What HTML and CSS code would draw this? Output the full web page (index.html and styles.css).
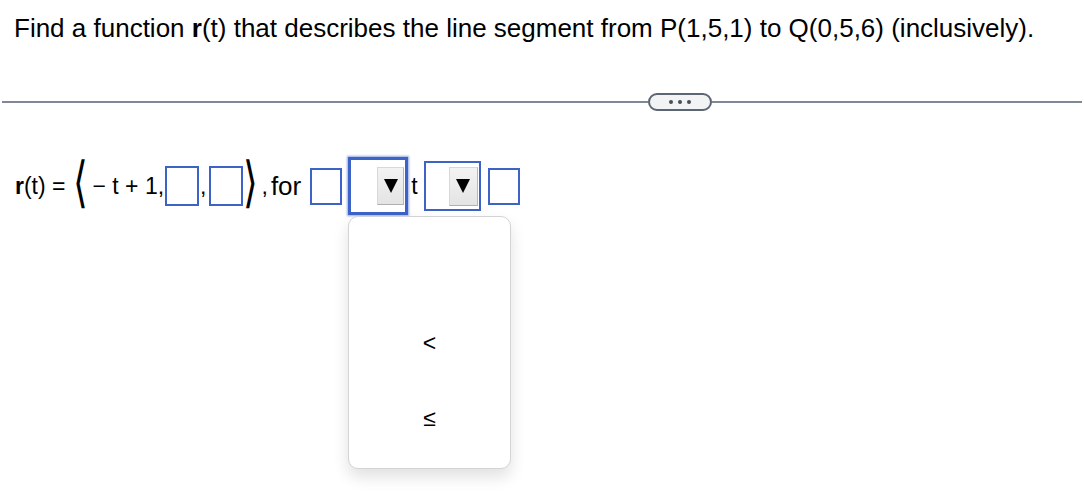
FILE: index.html
```html
<!DOCTYPE html>
<html>
<head>
<meta charset="utf-8">
<link rel="stylesheet" href="styles.css">
</head>
<body>
<div class="page">
  <p class="question">Find a function <b>r</b>(t) that describes the line segment from P(1,5,1) to Q(0,5,6) (inclusively).</p>
  <div class="divider">
    <span class="line first"></span>
    <span class="more"><i></i><i></i><i></i></span>
    <span class="line"></span>
  </div>
  <div class="answer">
    <span class="txt"><b>r</b>(t) =</span>
    <span class="angle">⟨</span>
    <span class="txt">− t + 1,</span>
    <span class="box"></span>
    <span class="txt comma">,</span>
    <span class="box"></span>
    <span class="angle r">⟩</span>
    <span class="txt comma2">,</span>
    <span class="txt for">for</span>
    <span class="box small"></span>
    <span class="sel focus"><span class="btn"><span class="tri"></span></span></span>
    <span class="txt tvar">t</span>
    <span class="sel second"><span class="btn wide"><span class="tri"></span></span></span>
    <span class="box small last"></span>
  </div>
  <div class="menu">
    <div class="opt">&lt;</div>
    <div class="opt">≤</div>
  </div>
</div>
</body>
</html>
```

FILE: styles.css
```css
html, body {
  margin: 0;
  padding: 0;
  background: #fff;
}
body {
  font-family: "Liberation Sans", Arial, sans-serif;
  color: #000;
}
.page {
  width: 1084px;
  height: 498px;
  position: relative;
  overflow: hidden;
}
.question {
  margin: 0;
  padding: 13px 0 0 14px;
  font-size: 26px;
  line-height: 30px;
}
.divider {
  display: flex;
  align-items: center;
  margin-top: 50px;
  padding: 0 2px;
}
.line {
  flex: 1;
  height: 2px;
  background: #7f8896;
}
.line.first {
  flex: 0 0 646px;
}
.more {
  display: flex;
  align-items: center;
  justify-content: center;
  gap: 5px;
  width: 60px;
  height: 14px;
  border: 2px solid #5b6573;
  border-radius: 10px;
  background: #f2f3f5;
}
.more i {
  width: 4px;
  height: 4px;
  border-radius: 50%;
  background: #4a4f57;
}
.answer {
  display: flex;
  align-items: center;
  margin-top: 45px;
  padding-left: 15px;
  height: 60px;
  font-size: 23px;
}
.txt {
  white-space: pre;
}
.angle {
  display: inline-block;
  font-family: "DejaVu Sans ExtraLight", "DejaVu Sans", sans-serif;
  font-size: 40px;
  font-weight: 200;
  line-height: 1;
  margin: 0 3px 0 8px;
  transform: translateY(-4px) scale(0.95, 1.38);
}
.angle.r {
  margin: 0 2px 0 0;
}
.box {
  width: 30px;
  height: 36px;
  border: 2px solid #3d63c9;
  margin-left: 1px;
}
.box.small {
  width: 28px;
  height: 33px;
  margin-left: 9px;
}
.comma {
  margin: 0 2px 0 1px;
}
.for {
  font-size: 26px;
  margin-left: 3px;
}
.sel {
  display: flex;
  align-items: center;
  justify-content: flex-end;
  width: 52px;
  height: 46px;
  border: 2px solid #3d63c9;
  padding-right: 1px;
  margin-left: 6px;
}
.sel.focus {
  width: 53px;
  height: 52px;
  border-width: 3px;
  box-shadow: 0 0 2px 1px rgba(61, 99, 201, 0.55);
  margin-left: 6px;
}
.tvar {
  margin-left: 3px;
}
.btn {
  display: flex;
  align-items: center;
  justify-content: center;
  width: 27px;
  height: 38px;
  background: linear-gradient(#f3f3f3, #e4e4e4);
  border: 1px solid;
  border-color: #d8d8d8 #b8b8b8 #b0b0b0 #d8d8d8;
  box-sizing: border-box;
}
.btn.wide {
  width: 29px;
  height: 39px;
}
.tri {
  width: 0;
  height: 0;
  border-left: 7.5px solid transparent;
  border-right: 7.5px solid transparent;
  border-top: 14px solid #000;
}
.box.last {
  margin-left: 7px;
}
.menu {
  position: absolute;
  left: 348px;
  top: 216px;
  width: 163px;
  height: 253px;
  border: 1px solid #d4d4d4;
  border-radius: 10px;
  background: #fff;
  box-shadow: 0 8px 16px rgba(0, 0, 0, 0.12);
  display: flex;
  flex-direction: column;
  justify-content: flex-end;
  padding-bottom: 12px;
  box-sizing: border-box;
}
.opt {
  height: 75px;
  display: flex;
  align-items: center;
  justify-content: center;
  font-size: 23px;
}
```
